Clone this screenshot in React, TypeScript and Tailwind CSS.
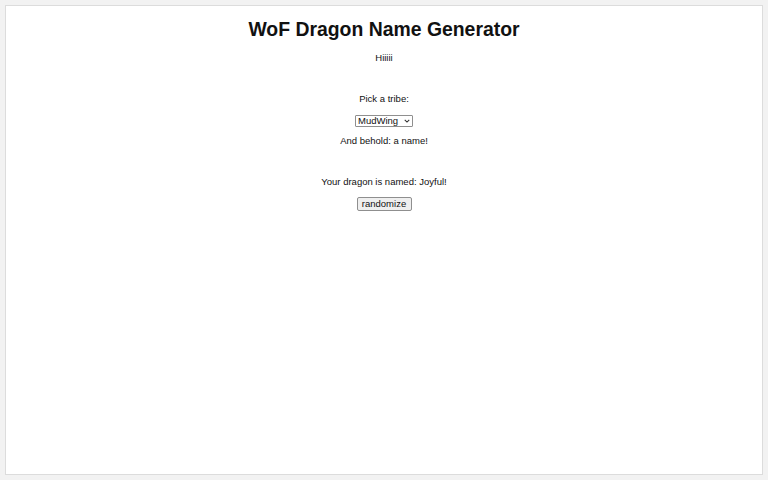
import { useState } from "react"

const names: Record<string, string[]> = {
  MudWing: ["Joyful", "Clay", "Umber", "Sora"],
  SandWing: ["Sunny", "Thorn", "Qibli", "Onyx"],
  SeaWing: ["Tsunami", "Riptide", "Anemone", "Turtle"],
}

export default function App() {
  const [tribe, setTribe] = useState("MudWing")
  const [name, setName] = useState("Joyful")

  const randomize = () => {
    const list = names[tribe]
    setName(list[Math.floor(Math.random() * list.length)])
  }

  return (
    <div className="h-[480px] w-[768px] bg-[#f2f2f2] p-[5px] font-['Liberation_Sans',Arial,sans-serif] text-[#111]">
      <div className="flex h-full flex-col items-center border border-[#dcdcdc] bg-white pt-[11px]">
        <h1 className="text-[19.4px] leading-[24px] font-bold">WoF Dragon Name Generator</h1>
        <p className="mt-[11px] text-[9.5px] leading-[12px]">Hiiiii</p>

        <p className="mt-[29px] text-[9.5px] leading-[12px]">Pick a tribe:</p>
        <div className="relative mt-[10px] h-[12px] w-[58px] leading-none">
          <select
            value={tribe}
            onChange={(e) => setTribe(e.target.value)}
            className="block h-[12px] w-full appearance-none rounded-[1px] border border-[#8f8f8f] bg-white py-0 pl-[2px] text-[9.5px] leading-[10px]"
          >
            {Object.keys(names).map((t) => (
              <option key={t}>{t}</option>
            ))}
          </select>
          <svg
            viewBox="0 0 8 5"
            className="pointer-events-none absolute top-[4px] right-[3px] h-[4px] w-[6px]"
            fill="none"
            stroke="#333"
            strokeWidth="1.4"
          >
            <path d="M1 1l3 3 3-3" />
          </svg>
        </div>
        <p className="mt-[8px] text-[9.5px] leading-[12px]">And behold: a name!</p>

        <p className="mt-[29px] text-[9.5px] leading-[12px]">Your dragon is named: {name}!</p>
        <button
          onClick={randomize}
          className="mt-[9px] h-[14px] w-[55px] rounded-[2px] border border-[#8f8f8f] bg-[#efefef] text-[9.5px] leading-[12px]"
        >
          randomize
        </button>
      </div>
    </div>
  )
}
